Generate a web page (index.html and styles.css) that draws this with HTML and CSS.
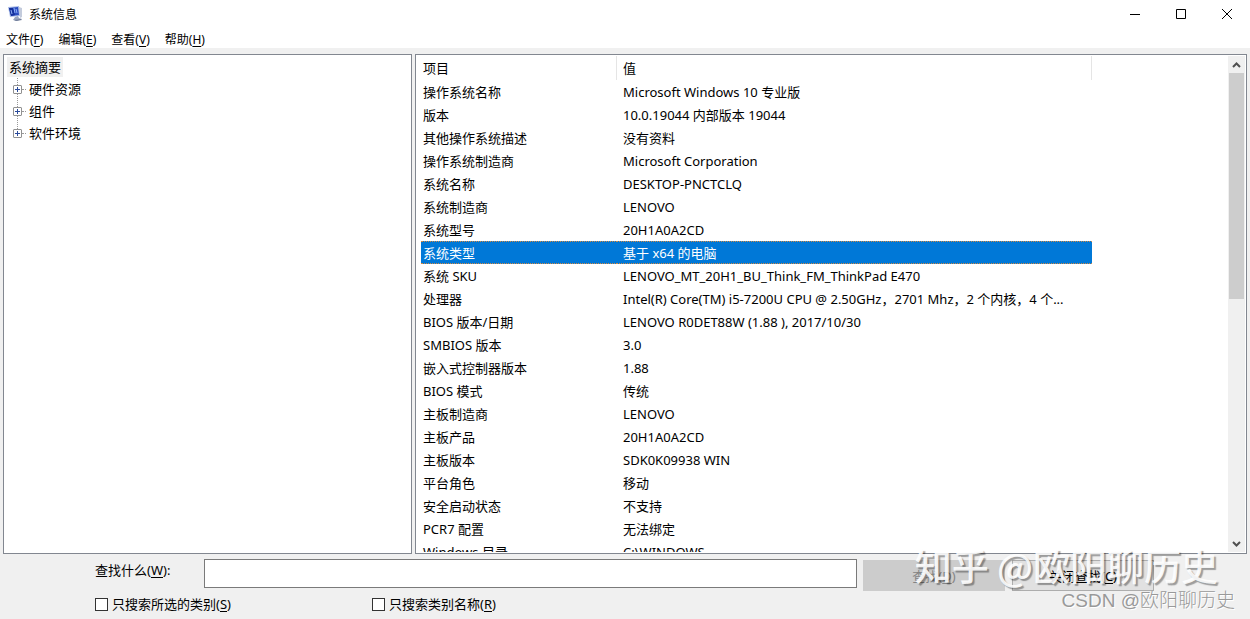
FILE: index.html
```html
<!DOCTYPE html>
<html lang="zh-CN">
<head>
    <meta charset="UTF-8">
    <meta name="viewport" content="width=device-width, initial-scale=1.0">
    <title>系统信息</title>
    <link rel="stylesheet" href="styles.css">
</head>
<body>
    <header class="titlebar">
        <svg class="app-icon" width="16" height="16" viewBox="0 0 16 16">
            <path d="M12 1l3 1v9l-2 1z" fill="#c3cbdc"/>
            <path d="M1 1l11-1 1 10-10 1z" fill="#a9bbe6"/>
            <path d="M2 2l9-1 1 8-8 1z" fill="#2a4cc0"/>
            <path d="M2 2l4 0 2 7-4 1z" fill="#14309c"/>
            <path d="M4 4l1 4M7 2l1 5M9 3l1 4" stroke="#8fb0f7" stroke-width="1"/>
            <path d="M8 11l3-1 1 2 3 1-5 2-4-1z" fill="#9aa6bf"/>
            <path d="M7 14l7-1 1 1-6 1z" fill="#6f7c99"/>
        </svg>
        <h1 class="title">系统信息</h1>
        <div class="window-buttons">
            <button type="button" aria-label="最小化">
                <svg width="12" height="12" viewBox="0 0 12 12"><path d="M1 6.5h10" stroke="#000"/></svg>
            </button>
            <button type="button" aria-label="最大化">
                <svg width="12" height="12" viewBox="0 0 12 12"><path d="M1.5 1.5h9v9h-9z" fill="none" stroke="#000"/></svg>
            </button>
            <button type="button" aria-label="关闭">
                <svg width="12" height="12" viewBox="0 0 12 12"><path d="M1 1l10 10M11 1L1 11" stroke="#000"/></svg>
            </button>
        </div>
    </header>

    <nav class="menubar">
        <button type="button">文件(<u>F</u>)</button>
        <button type="button">编辑(<u>E</u>)</button>
        <button type="button">查看(<u>V</u>)</button>
        <button type="button">帮助(<u>H</u>)</button>
    </nav>

    <main class="panels">
        <section class="panel tree-panel">
            <span class="tree-root">系统摘要</span>
            <ul class="tree">
                <li><button type="button" class="expand" aria-label="展开硬件资源"></button><span class="branch"></span>硬件资源</li>
                <li><button type="button" class="expand" aria-label="展开组件"></button><span class="branch"></span>组件</li>
                <li><button type="button" class="expand" aria-label="展开软件环境"></button><span class="branch"></span>软件环境</li>
            </ul>
        </section>

        <section class="panel list-panel">
            <div class="list">
                <table>
                    <thead>
                        <tr><th class="col-item">项目</th><th class="col-value">值</th></tr>
                    </thead>
                    <tbody>
                        <tr><td>操作系统名称</td><td>Microsoft Windows 10 专业版</td></tr>
                        <tr><td>版本</td><td>10.0.19044 内部版本 19044</td></tr>
                        <tr><td>其他操作系统描述</td><td>没有资料</td></tr>
                        <tr><td>操作系统制造商</td><td>Microsoft Corporation</td></tr>
                        <tr><td>系统名称</td><td>DESKTOP-PNCTCLQ</td></tr>
                        <tr><td>系统制造商</td><td>LENOVO</td></tr>
                        <tr><td>系统型号</td><td>20H1A0A2CD</td></tr>
                        <tr class="selected"><td>系统类型</td><td>基于 x64 的电脑</td></tr>
                        <tr><td>系统 SKU</td><td>LENOVO_MT_20H1_BU_Think_FM_ThinkPad E470</td></tr>
                        <tr><td>处理器</td><td>Intel(R) Core(TM) i5-7200U CPU @ 2.50GHz，2701 Mhz，2 个内核，4 个...</td></tr>
                        <tr><td>BIOS 版本/日期</td><td>LENOVO R0DET88W (1.88 ), 2017/10/30</td></tr>
                        <tr><td>SMBIOS 版本</td><td>3.0</td></tr>
                        <tr><td>嵌入式控制器版本</td><td>1.88</td></tr>
                        <tr><td>BIOS 模式</td><td>传统</td></tr>
                        <tr><td>主板制造商</td><td>LENOVO</td></tr>
                        <tr><td>主板产品</td><td>20H1A0A2CD</td></tr>
                        <tr><td>主板版本</td><td>SDK0K09938 WIN</td></tr>
                        <tr><td>平台角色</td><td>移动</td></tr>
                        <tr><td>安全启动状态</td><td>不支持</td></tr>
                        <tr><td>PCR7 配置</td><td>无法绑定</td></tr>
                        <tr><td>Windows 目录</td><td>C:\WINDOWS</td></tr>
                    </tbody>
                </table>
            </div>
            <div class="scrollbar">
                <button type="button" aria-label="向上滚动">
                    <svg width="9" height="6" viewBox="0 0 9 6"><path d="M1 5l3.500-3.500L8 5" fill="none" stroke="#505050" stroke-width="2"/></svg>
                </button>
                <div class="track"><div class="thumb"></div></div>
                <button type="button" aria-label="向下滚动">
                    <svg width="9" height="6" viewBox="0 0 9 6"><path d="M1 1l3.500 3.500L8 1" fill="none" stroke="#505050" stroke-width="2"/></svg>
                </button>
            </div>
        </section>
    </main>

    <form class="search">
        <div class="search-row">
            <label class="search-label" for="keyword">查找什么(<u>W</u>):</label>
            <input type="text" id="keyword" class="keyword">
            <button type="button" class="btn btn-find" disabled>查找(<u>D</u>)</button>
            <button type="button" class="btn">关闭查找(<u>C</u>)</button>
        </div>
        <div class="options">
            <label class="option"><input type="checkbox">只搜索所选的类别(<u>S</u>)</label>
            <label class="option"><input type="checkbox">只搜索类别名称(<u>R</u>)</label>
        </div>
    </form>

    <div class="watermark watermark-zhihu">知乎 @欧阳聊历史</div>
    <div class="watermark watermark-csdn">CSDN @欧阳聊历史</div>
</body>
</html>
```
FILE: styles.css
```css
* {
    box-sizing: border-box;
}
body {
    font-family: "Noto Sans", "Noto Sans CJK SC", sans-serif;
    font-size: 13px;
    line-height: 20px;
    color: #000;
    background: #f0f0f0;
    height: 100vh;
    margin: 0;
    display: flex;
    flex-direction: column;
    overflow: hidden;
}
button, input {
    font: inherit;
    color: inherit;
    margin: 0;
    padding: 0;
}
button {
    border: none;
    background: none;
}
u {
    text-underline-offset: 2px;
}

/* Title bar and menus */
.titlebar {
    display: flex;
    align-items: center;
    height: 28px;
    padding-left: 7px;
    background: #fff;
}
.title {
    margin: 0 0 0 6px;
    font-size: 12px;
    line-height: 28px;
    padding-top: 2px;
    font-weight: 400;
}
.window-buttons {
    display: flex;
    height: 100%;
    margin-left: auto;
}
.window-buttons button {
    display: flex;
    align-items: center;
    justify-content: center;
    width: 46px;
}
.menubar {
    display: flex;
    gap: 15px;
    height: 20px;
    padding: 2px 6px 0;
    background: #fff;
    font-size: 12px;
    flex-shrink: 0;
}
.menubar button {
    line-height: 20px;
}

/* Panels */
.panels {
    display: flex;
    flex: 1;
    gap: 3px;
    min-height: 0;
    padding: 6px 3px 0;
}
.panel {
    background: #fff;
    border: 1px solid #828790;
    overflow: hidden;
}
.tree-panel {
    flex: 0 0 409px;
    padding: 2px 3px;
}
.tree-root {
    display: block;
    width: fit-content;
    padding: 0 2px;
    background: #f0f0f0;
}
.tree {
    list-style: none;
    margin: 1px 0 0 6px;
    padding: 0;
}
.tree li {
    display: flex;
    align-items: center;
    height: 22px;
    background: repeating-linear-gradient(#999 0 1px, #fff 1px 2px) 4px 0 / 1px 100% no-repeat;
}
.tree li:last-child {
    background-size: 1px 50%;
}
.expand {
    width: 9px;
    height: 9px;
    border: 1px solid #919191;
    border-radius: 1px;
    background: linear-gradient(#2b4b9b, #2b4b9b) center / 5px 1px no-repeat,
        linear-gradient(#2b4b9b, #2b4b9b) center / 1px 5px no-repeat, #fff;
}
.branch {
    width: 4px;
    margin-right: 3px;
    border-top: 1px dotted #999;
}
.list-panel {
    display: flex;
    flex: 1;
    padding: 1px;
}
.list {
    flex: 1;
    min-width: 0;
    padding-left: 4px;
    overflow: hidden;
}
table {
    width: 671px;
    table-layout: fixed;
    border-collapse: separate;
    border-spacing: 0;
}
th, td {
    height: 23px;
    padding: 0 2px;
    line-height: 22px;
    text-align: left;
    font-weight: 400;
    white-space: nowrap;
    overflow: hidden;
}
th {
    height: 24px;
    border-right: 1px solid #e5e5e5;
}
.col-item {
    width: 196px;
}
th:last-child, td:last-child {
    padding-left: 6px;
}
.selected td {
    background: #0078d7;
    color: #fff;
    border: 1px dotted #d08a45;
    border-width: 1px 0;
    line-height: 20px;
}
.scrollbar {
    display: flex;
    flex-direction: column;
    width: 17px;
    background: #f0f0f0;
}
.scrollbar button {
    display: flex;
    align-items: center;
    justify-content: center;
    height: 17px;
}
.track {
    flex: 1;
    padding: 0 1px;
}
.thumb {
    height: 49%;
    background: #cdcdcd;
}

/* Search area */
.search {
    padding: 5px 96px 5px 95px;
}
.search-row {
    display: flex;
    align-items: flex-start;
}
.search-label {
    width: 109px;
    line-height: 22px;
}
.keyword {
    flex: 1;
    min-width: 0;
    height: 29px;
    border: 1px solid #7a7a7a;
    background: #fff;
}
.btn {
    width: 142px;
    height: 31px;
    margin: 1px 0 0 7px;
    border: 1px solid #adadad;
    background: #e1e1e1;
}
.btn-find {
    margin-left: 6px;
    border-color: #ccc;
    background: #ccc;
    color: #838383;
}
.options {
    display: flex;
    padding-top: 3px;
}
.option {
    display: flex;
    align-items: center;
    width: 277px;
}
.option input {
    appearance: none;
    width: 13px;
    height: 13px;
    margin-right: 4px;
    border: 1px solid #333;
    background: #fff;
}

/* Watermarks */
.watermark {
    position: absolute;
    white-space: nowrap;
    pointer-events: none;
}
.watermark-zhihu {
    right: 32px;
    bottom: 30px;
    font-family: "Noto Sans CJK SC", sans-serif;
    font-size: 37px;
    font-weight: 500;
    line-height: 48px;
    color: rgba(255, 255, 255, 0.9);
    text-shadow: 2px 2px 1px rgba(0, 0, 0, 0.35);
}
.watermark-csdn {
    right: 15px;
    bottom: 6px;
    font-family: "Liberation Sans", "Noto Sans CJK SC", sans-serif;
    font-size: 19px;
    font-weight: 300;
    line-height: 24px;
    color: #999;
    text-shadow: 1px 1px 0 #fff;
}
```
